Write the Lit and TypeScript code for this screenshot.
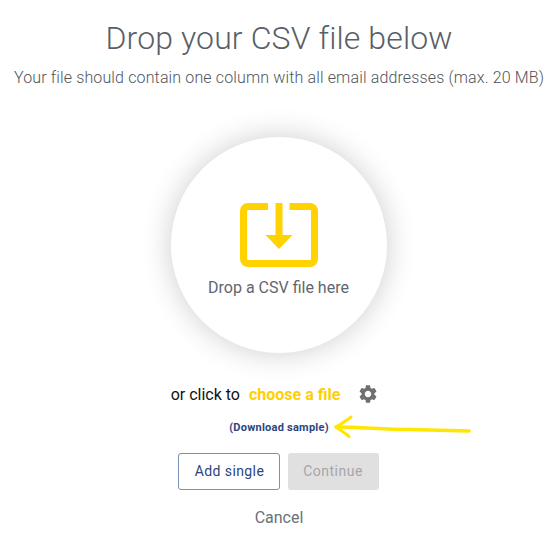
import { LitElement, html, css } from "lit";
import { customElement } from "lit/decorators.js";

@customElement("app-root")
export class AppRoot extends LitElement {
  static styles = css`
    :host {
      display: block;
      position: relative;
      width: 558px;
      height: 536px;
      overflow: hidden;
      background: #fff;
      font-family: Roboto, sans-serif;
      text-align: center;
      color: #5f6368;
    }
    .page {
      display: flex;
      flex-direction: column;
      align-items: center;
      padding-top: 19px;
    }
    h1 {
      margin: 0;
      font-size: 32px;
      line-height: 38px;
      font-weight: 300;
      letter-spacing: 0.12px;
      color: #5a5f66;
    }
    .sub {
      margin: 11px 0 0;
      font-size: 16px;
      line-height: 20px;
      font-weight: 300;
      letter-spacing: 0.14px;
      color: #50555c;
      white-space: nowrap;
    }
    .circle {
      margin-top: 49px;
      width: 216px;
      height: 216px;
      border-radius: 50%;
      background: #fff;
      box-shadow: 0 0 30px rgba(0, 0, 0, 0.2);
      display: flex;
      flex-direction: column;
      align-items: center;
    }
    .circle svg {
      margin-top: 66px;
      display: block;
    }
    .drop {
      margin-top: 11px;
      margin-right: 1px;
      font-size: 16px;
      line-height: 20px;
      color: #62666e;
    }
    .choose {
      margin-top: 31px;
      display: flex;
      align-items: center;
      height: 20px;
      font-size: 16px;
      color: #111;
      margin-right: 10px;
    }
    .link {
      margin-left: 9px;
      font-weight: 700;
      color: #ffd000;
    }
    .gear {
      margin-left: 19px;
      display: block;
    }
    .sample {
      margin-top: 17px;
      font-size: 11px;
      line-height: 14px;
      font-weight: 700;
      color: #2b4580;
      letter-spacing: 0.25px;
    }
    .buttons {
      margin-top: 18px;
      display: flex;
      gap: 8px;
      margin-right: 2px;
    }
    .btn {
      box-sizing: border-box;
      height: 37px;
      border-radius: 3px;
      font-family: inherit;
      font-size: 14px;
      letter-spacing: 0.5px;
      padding: 0 0 2px;
      background: #fff;
    }
    .add {
      width: 102px;
      border: 1px solid #7d8fb3;
      color: #2b4580;
      padding-left: 2px;
      letter-spacing: 0.4px;
    }
    .cont {
      width: 91px;
      border: none;
      background: #e0e0e0;
      color: #a6a6a6;
    }
    .cancel {
      margin-top: 18px;
      font-size: 16px;
      line-height: 20px;
      color: #6b7078;
    }
    .annot {
      position: absolute;
      left: 330px;
      top: 412px;
      pointer-events: none;
    }
  `;

  render() {
    return html`
      <div class="page">
        <h1>Drop your CSV file below</h1>
        <p class="sub">Your file should contain one column with all email addresses (max. 20 MB)</p>
        <div class="circle">
          <svg width="78" height="64" viewBox="0 0 78 64" fill="none">
            <path d="M28 3.500H8a4.500 4.500 0 0 0-4.500 4.500v48a4.500 4.500 0 0 0 4.500 4.500h62a4.500 4.500 0 0 0 4.500-4.500V8A4.500 4.500 0 0 0 70 3.500H49.500" stroke="#ffd200" stroke-width="7"/>
            <path d="M35.500 0h7v32h-7z" fill="#ffd200"/>
            <path d="M25.500 32h27L39 46z" fill="#ffd200"/>
          </svg>
          <div class="drop">Drop a CSV file here</div>
        </div>
        <div class="choose">
          <span>or click to</span>
          <span class="link">choose a file</span>
          <svg class="gear" width="18" height="18" viewBox="2 2 20 20" fill="#6f6f6f">
            <path d="M19.140 12.940c.040-.300.060-.610.060-.940 0-.320-.020-.640-.070-.940l2.030-1.580a.490.490 0 0 0 .120-.610l-1.920-3.320a.488.488 0 0 0-.590-.220l-2.390.960c-.500-.380-1.030-.700-1.620-.940l-.360-2.540a.484.484 0 0 0-.480-.410h-3.840c-.240 0-.430.170-.470.410l-.360 2.540c-.590.240-1.130.570-1.620.940l-2.390-.960c-.220-.080-.470 0-.590.220L2.740 8.870c-.120.210-.080.470.120.610l2.030 1.580c-.050.300-.090.630-.090.940s.020.640.070.940l-2.030 1.580a.490.490 0 0 0-.120.610l1.920 3.320c.120.220.370.290.590.220l2.390-.960c.500.380 1.030.700 1.620.940l.360 2.540c.050.240.240.410.480.410h3.840c.240 0 .440-.170.470-.410l.360-2.540c.590-.240 1.130-.560 1.620-.940l2.390.960c.220.080.470 0 .590-.220l1.920-3.320c.120-.220.070-.470-.120-.610l-2.010-1.580zM12 15.600c-1.980 0-3.600-1.620-3.600-3.600s1.620-3.600 3.600-3.600 3.600 1.620 3.600 3.600-1.620 3.600-3.600 3.600z"/>
          </svg>
        </div>
        <div class="sample">(Download sample)</div>
        <div class="buttons">
          <button class="btn add">Add single</button>
          <button class="btn cont" disabled>Continue</button>
        </div>
        <div class="cancel">Cancel</div>
      </div>
      <svg class="annot" width="145" height="30" viewBox="0 0 145 30" fill="none">
        <path d="M6 15C30 15 50 17 80 17.500C100 18 120 18.500 139 19" stroke="#ffe600" stroke-width="3.500" stroke-linecap="round"/>
        <path d="M21 5C16 9 11 12 6 15C10 18 15 21 19 24.500" stroke="#ffe600" stroke-width="3" stroke-linecap="round" stroke-linejoin="round"/>
      </svg>
    `;
  }
}
